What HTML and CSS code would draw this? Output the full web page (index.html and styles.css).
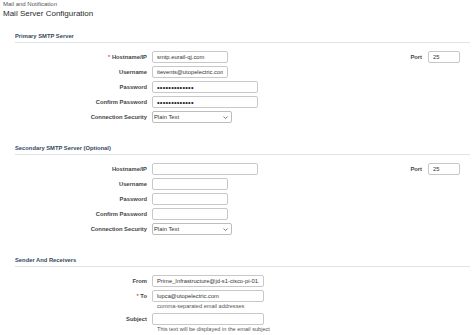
FILE: index.html
```html
<!DOCTYPE html>
<html lang="en">
<head>
    <meta charset="UTF-8">
    <title>Mail Server Configuration</title>
    <link rel="stylesheet" href="styles.css">
</head>
<body>
<div class="crumb">Mail and Notification</div>
<h1 class="title">Mail Server Configuration</h1>

<section class="group">
    <h2 class="group-title">Primary SMTP Server</h2>
    <div class="rows">
        <div class="row">
            <label class="lbl"><span class="req">*</span> Hostname/IP</label>
            <input class="fld short" type="text" value="smtp.eurail-qj.com">
            <div class="port">
                <label class="lbl-port">Port</label>
                <input class="fld port-in" type="text" value="25">
            </div>
        </div>
        <div class="row">
            <label class="lbl">Username</label>
            <input class="fld short" type="text" value="itevents@utopelectric.com">
        </div>
        <div class="row">
            <label class="lbl">Password</label>
            <input class="fld long pass" type="password" value="aaaaaaaaaaaaa">
        </div>
        <div class="row">
            <label class="lbl">Confirm Password</label>
            <input class="fld long pass" type="password" value="aaaaaaaaaaaaa">
        </div>
        <div class="row">
            <label class="lbl">Connection Security</label>
            <div class="select-wrap">
                <select class="fld sel">
                    <option>Plain Text</option>
                </select>
                <svg class="chev" width="5" height="3" viewBox="0 0 5 3"><polyline points="0.5,0.5 2.5,2.5 4.5,0.5" fill="none" stroke="#555" stroke-width="0.8"/></svg>
            </div>
        </div>
    </div>
</section>

<section class="group">
    <h2 class="group-title">Secondary SMTP Server (Optional)</h2>
    <div class="rows">
        <div class="row">
            <label class="lbl">Hostname/IP</label>
            <input class="fld long" type="text" value="">
            <div class="port">
                <label class="lbl-port">Port</label>
                <input class="fld port-in" type="text" value="25">
            </div>
        </div>
        <div class="row">
            <label class="lbl">Username</label>
            <input class="fld short" type="text" value="">
        </div>
        <div class="row">
            <label class="lbl">Password</label>
            <input class="fld short" type="password" value="">
        </div>
        <div class="row">
            <label class="lbl">Confirm Password</label>
            <input class="fld short" type="password" value="">
        </div>
        <div class="row">
            <label class="lbl">Connection Security</label>
            <div class="select-wrap">
                <select class="fld sel">
                    <option>Plain Text</option>
                </select>
                <svg class="chev" width="5" height="3" viewBox="0 0 5 3"><polyline points="0.5,0.5 2.5,2.5 4.5,0.5" fill="none" stroke="#555" stroke-width="0.8"/></svg>
            </div>
        </div>
    </div>
</section>

<section class="group">
    <h2 class="group-title">Sender And Receivers</h2>
    <div class="rows">
        <div class="row">
            <label class="lbl">From</label>
            <input class="fld wide" type="text" value="Prime_Infrastructure@jd-s1-cisco-pi-01.cisco.com">
        </div>
        <div class="row">
            <label class="lbl"><span class="req">*</span> To</label>
            <div class="field-col">
                <input class="fld wide" type="text" value="lupca@utopelectric.com">
                <div class="hint">comma-separated email addresses</div>
            </div>
        </div>
        <div class="row">
            <label class="lbl">Subject</label>
            <div class="field-col">
                <input class="fld wide" type="text" value="">
                <div class="hint">This text will be displayed in the email subject</div>
            </div>
        </div>
    </div>
</section>
</body>
</html>
```

FILE: styles.css
```css
body {
    margin: 0;
    font-family: "Liberation Sans", Arial, sans-serif;
    background-color: #fff;
    color: #333;
}

.crumb {
    font-size: 6px;
    line-height: 7px;
    padding: 1px 0 0 3px;
    color: #555;
}

.title {
    font-size: 8px;
    line-height: 10px;
    font-weight: normal;
    margin: 1px 0 0 3px;
    color: #2a2a2a;
}

.group {
    margin: 13px 4px 0 15px;
}

.group + .group {
    margin-top: 21px;
}

.group-title {
    margin: 0;
    font-size: 5.8px;
    line-height: 8px;
    font-weight: bold;
    color: #34495e;
    padding-bottom: 2px;
    border-bottom: 1px solid #dfe3e8;
}

.rows {
    display: flex;
    flex-direction: column;
    gap: 3px;
    padding-top: 8px;
}

.row {
    display: flex;
    align-items: flex-start;
}

.lbl {
    width: 132px;
    margin-right: 5px;
    text-align: right;
    font-size: 5.8px;
    line-height: 12px;
    font-weight: bold;
    color: #444;
}

.req {
    color: #d0021b;
    font-weight: normal;
}

.fld {
    box-sizing: border-box;
    height: 12px;
    margin: 0;
    border: 1px solid #c8c8c8;
    border-radius: 2px;
    padding: 0 4px;
    font-family: "Liberation Sans", Arial, sans-serif;
    font-size: 5.8px;
    color: #333;
    background-color: #fff;
    outline: none;
}

.short { width: 76px; }
.long { width: 106px; }
.wide { width: 112px; }

.pass {
    font-size: 7.5px;
    letter-spacing: 0.2px;
    color: #222;
}

/* select with own chevron */
.select-wrap {
    position: relative;
    display: flex;
}

.sel {
    width: 80px;
    padding: 0 1px;
    -webkit-appearance: none;
    appearance: none;
    border-color: #bdbdbd;
}

.chev {
    position: absolute;
    right: 4px;
    top: 5px;
}

.port {
    margin-left: auto;
    margin-right: 10px;
    display: flex;
}

.lbl-port {
    margin-right: 6px;
    font-size: 5.8px;
    line-height: 12px;
    font-weight: bold;
    color: #444;
}

.port-in {
    width: 32px;
}

.field-col {
    display: flex;
    flex-direction: column;
}

.hint {
    padding-left: 5px;
    font-size: 5.6px;
    line-height: 8px;
    color: #555;
}
```
